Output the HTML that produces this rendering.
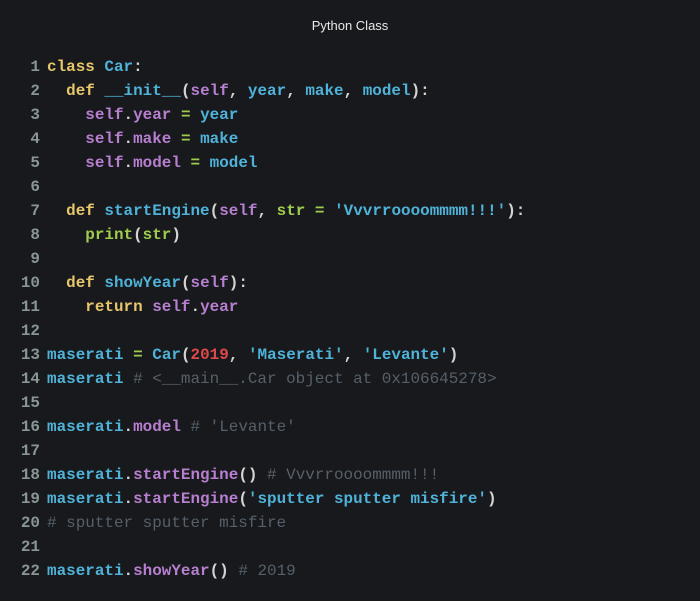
<!DOCTYPE html>
<html><head><meta charset="utf-8"><style>
html,body{margin:0;padding:0;background:#18191c;}
body{width:700px;height:601px;overflow:hidden;position:relative;}
.t{position:absolute;top:18px;left:0;width:700px;text-align:center;color:#e8e8e8;font:13px "Liberation Sans",sans-serif;}
.c{position:absolute;top:55px;left:0;font:bold 15.95px/24px "Liberation Mono",monospace;color:#d4d4d4;white-space:pre;}
.l{display:block;height:24px;}
.n{display:inline-block;width:40px;text-align:right;color:#8a9696;margin-right:7px;}
.k{color:#e7c66b}.b{color:#4fb3d9}.p{color:#b77fd0}.g{color:#9fcc4e}.r{color:#e0484a}.m{color:#56606a;font-weight:normal}
</style></head><body>
<div class="t">Python Class</div>
<div class="c"><span class="l"><span class="n">1</span><span class="k">class</span> <span class="b">Car</span>:</span><span class="l"><span class="n">2</span>  <span class="k">def</span> <span class="b">__init__</span>(<span class="p">self</span>, <span class="b">year</span>, <span class="b">make</span>, <span class="b">model</span>):</span><span class="l"><span class="n">3</span>    <span class="p">self</span>.<span class="p">year</span> <span class="g">=</span> <span class="b">year</span></span><span class="l"><span class="n">4</span>    <span class="p">self</span>.<span class="p">make</span> <span class="g">=</span> <span class="b">make</span></span><span class="l"><span class="n">5</span>    <span class="p">self</span>.<span class="p">model</span> <span class="g">=</span> <span class="b">model</span></span><span class="l"><span class="n">6</span></span><span class="l"><span class="n">7</span>  <span class="k">def</span> <span class="b">startEngine</span>(<span class="p">self</span>, <span class="g">str</span> <span class="g">=</span> <span class="b">'Vvvrroooommmm!!!'</span>):</span><span class="l"><span class="n">8</span>    <span class="g">print</span>(<span class="g">str</span>)</span><span class="l"><span class="n">9</span></span><span class="l"><span class="n">10</span>  <span class="k">def</span> <span class="b">showYear</span>(<span class="p">self</span>):</span><span class="l"><span class="n">11</span>    <span class="k">return</span> <span class="p">self</span>.<span class="p">year</span></span><span class="l"><span class="n">12</span></span><span class="l"><span class="n">13</span><span class="b">maserati</span> <span class="g">=</span> <span class="b">Car</span>(<span class="r">2019</span>, <span class="b">'Maserati'</span>, <span class="b">'Levante'</span>)</span><span class="l"><span class="n">14</span><span class="b">maserati</span> <span class="m"># &lt;__main__.Car object at 0x106645278&gt;</span></span><span class="l"><span class="n">15</span></span><span class="l"><span class="n">16</span><span class="b">maserati</span>.<span class="p">model</span> <span class="m"># 'Levante'</span></span><span class="l"><span class="n">17</span></span><span class="l"><span class="n">18</span><span class="b">maserati</span>.<span class="p">startEngine</span>() <span class="m"># Vvvrroooommmm!!!</span></span><span class="l"><span class="n">19</span><span class="b">maserati</span>.<span class="p">startEngine</span>(<span class="b">'sputter sputter misfire'</span>)</span><span class="l"><span class="n">20</span><span class="m"># sputter sputter misfire</span></span><span class="l"><span class="n">21</span></span><span class="l"><span class="n">22</span><span class="b">maserati</span>.<span class="p">showYear</span>() <span class="m"># 2019</span></span></div>
</body></html>
